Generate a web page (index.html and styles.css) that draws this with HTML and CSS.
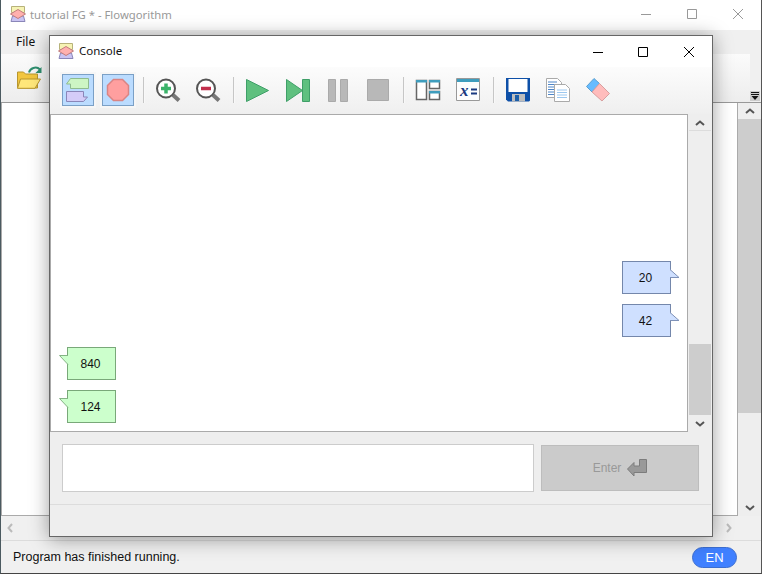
FILE: index.html
```html
<!DOCTYPE html>
<html lang="en">
<head>
<meta charset="utf-8">
<title>tutorial FG * - Flowgorithm</title>
<link rel="stylesheet" href="styles.css">
</head>
<body>
<svg class="defs" width="0" height="0">
  <symbol id="logo" viewBox="0 0 16 16">
    <path d="M1.500.5h13v6h-13z" fill="#f6f3b4" stroke="#b7b27a"/>
    <path d="M2.500 10h11l1.500 5.500H1z" fill="#c9c3f2" stroke="#8a86b8"/>
    <path d="M8 3.500 15.500 8 8 12.500.5 8z" fill="#ffb0ae" stroke="#c07c7c"/>
  </symbol>
  <symbol id="ch-up" viewBox="0 0 10 6"><path d="M1 5 5 1.500 9 5" fill="none" stroke="currentColor" stroke-width="2"/></symbol>
  <symbol id="ch-down" viewBox="0 0 10 6"><path d="M1 1 5 4.500 9 1" fill="none" stroke="currentColor" stroke-width="2"/></symbol>
  <symbol id="ch-left" viewBox="0 0 6 10"><path d="M5 1 1.500 5 5 9" fill="none" stroke="currentColor" stroke-width="2"/></symbol>
  <symbol id="ch-right" viewBox="0 0 6 10"><path d="M1 1 4.500 5 1 9" fill="none" stroke="currentColor" stroke-width="2"/></symbol>
</svg>

<div class="app">
  <header class="titlebar">
    <svg class="logo"><use href="#logo"/></svg>
    <span class="title-text muted">tutorial FG * - Flowgorithm</span>
    <div class="win-controls muted-controls">
      <svg class="wc" viewBox="0 0 10 10"><path d="M0 5.500h10"/></svg>
      <svg class="wc" viewBox="0 0 10 10"><path d="M.5.500h9v9h-9z"/></svg>
      <svg class="wc" viewBox="0 0 10 10"><path d="M0 0l10 10M10 0 0 10"/></svg>
    </div>
  </header>
  <nav class="menubar"><span class="menu-item">File</span></nav>
  <div class="main-toolbar">
    <svg class="open-icon" viewBox="0 0 32 32">
      <path d="M3.500 26V10h6l2 2h12v14z" fill="#f2c63f" stroke="#b8962e"/>
      <path d="M3.500 26.300 6.500 17h20l-5.500 9.300z" fill="#ffe77a" stroke="#b8962e"/>
      <path d="M15 10.500c1-4 7-7 11-3" fill="none" stroke="#2f8f6f" stroke-width="2"/>
      <path d="M27.500 5v6h-6z" fill="#2f8f6f"/>
    </svg>
    <div class="toolbar-end">
      <button class="overflow-btn" type="button">
        <svg width="8" height="8" viewBox="0 0 8 8"><path d="M0 .5h8M0 2.500h8" stroke="#111"/><path d="M.5 4h7L4 8z" fill="#111"/></svg>
      </button>
    </div>
  </div>
  <div class="workspace">
    <div class="canvas"></div>
    <div class="vscroll">
      <svg class="chev-v up"><use href="#ch-up"/></svg>
      <div class="main-thumb"></div>
      <div class="spacer"></div>
      <svg class="chev-v down"><use href="#ch-down"/></svg>
    </div>
  </div>
  <div class="hscroll">
    <svg class="chev-h"><use href="#ch-left"/></svg>
    <svg class="chev-h"><use href="#ch-right"/></svg>
  </div>
  <footer class="statusbar">
    <span>Program has finished running.</span>
    <span class="lang-pill">EN</span>
  </footer>
</div>

<section class="console">
  <header class="console-title">
    <svg class="logo"><use href="#logo"/></svg>
    <span class="title-text">Console</span>
    <div class="win-controls console-controls">
      <svg class="wc" viewBox="0 0 10 10"><path d="M0 5.500h10"/></svg>
      <svg class="wc" viewBox="0 0 10 10"><path d="M.5.500h9v9h-9z"/></svg>
      <svg class="wc" viewBox="0 0 10 10"><path d="M0 0l10 10M10 0 0 10"/></svg>
    </div>
  </header>

  <div class="console-toolbar">
    <button class="tb active" type="button"><svg viewBox="0 0 32 32">
      <path d="M8.500 4.500h18v10h-18v-4.500h-4z" fill="#cdf5c4" stroke="#8fbb8f"/>
      <path d="M4.500 17.500h17v5.500h4l-4 4.500h-17z" fill="#d4ccf8" stroke="#8a86b8"/>
    </svg></button>
    <button class="tb active" type="button"><svg viewBox="0 0 32 32">
      <path d="M11.500 5.500h9l6 6v9l-6 6h-9l-6-6v-9z" fill="#ff9f9f" stroke="#d98484" stroke-width="1.500"/>
    </svg></button>
    <span class="sep"></span>
    <button class="tb" type="button"><svg viewBox="0 0 32 32">
      <path d="M21 21l6 5.500" stroke="#777" stroke-width="4"/>
      <circle cx="14" cy="14.500" r="9" fill="#fff" stroke="#555" stroke-width="2"/>
      <path d="M14 9.500v10M9 14.500h10" stroke="#3bb36a" stroke-width="3.500"/>
    </svg></button>
    <button class="tb" type="button"><svg viewBox="0 0 32 32">
      <path d="M21 21l6 5.500" stroke="#777" stroke-width="4"/>
      <circle cx="14" cy="14.500" r="9" fill="#fff" stroke="#555" stroke-width="2"/>
      <path d="M9 14.500h10" stroke="#c22f4c" stroke-width="3.500"/>
    </svg></button>
    <span class="sep"></span>
    <button class="tb" type="button"><svg viewBox="0 0 32 32">
      <path d="M4.500 5.500 26.500 16.500 4.500 27.500z" fill="#5fc07f" stroke="#3f9f68"/>
    </svg></button>
    <button class="tb" type="button"><svg viewBox="0 0 32 32">
      <path d="M4.500 5.500 20.500 16.500 4.500 27.500z" fill="#5fc07f" stroke="#3f9f68"/>
      <path d="M20.500 5.500h7v22h-7z" fill="#5fc07f" stroke="#3f9f68"/>
    </svg></button>
    <button class="tb" type="button"><svg viewBox="0 0 32 32">
      <path d="M6.500 5.500h7v22h-7zM18.500 5.500h7v22h-7z" fill="#b8b8b8" stroke="#aaa"/>
    </svg></button>
    <button class="tb" type="button"><svg viewBox="0 0 32 32">
      <path d="M5.500 5.500h21v21h-21z" fill="#b8b8b8" stroke="#aaa"/>
    </svg></button>
    <span class="sep"></span>
    <button class="tb" type="button"><svg viewBox="0 0 32 32">
      <path d="M4.500 6.500h10v19h-10zM17.500 6.500h10v8h-10zM17.500 17.500h10v8h-10z" fill="#fff" stroke="#666" stroke-width="1.500"/>
      <path d="M4 6h11v2.500H4zM17 6h11v2.500H17zM17 17h11v2.500H17z" fill="#3f9dbd"/>
    </svg></button>
    <button class="tb" type="button"><svg viewBox="0 0 32 32">
      <path d="M4.500 4.500h23v22h-23z" fill="#fdfdfd" stroke="#999"/>
      <path d="M5 5h22v3H5z" fill="#3f9dbd"/>
      <text class="var-x" x="8" y="22">x</text>
      <path d="M19 14.500h6v2h-6zM19 18.500h6v2h-6z" fill="#1b3a80"/>
    </svg></button>
    <span class="sep"></span>
    <button class="tb" type="button"><svg viewBox="0 0 32 32">
      <path d="M4 4h24v22.500l-1 1H6l-2-2z" fill="#0e50a8"/>
      <path d="M6.500 5h19v13h-19z" fill="#fff"/>
      <path d="M10 20h13v7.500H10z" fill="#bdbdbd"/>
      <path d="M13 21h4v6h-4z" fill="#1c5ea8"/>
    </svg></button>
    <button class="tb" type="button"><svg viewBox="0 0 32 32">
      <path d="M4.500 4.500h11l4 4v15h-15z" fill="#fff" stroke="#aaa"/>
      <path d="M6 8h9M6 10.500h9M6 13h9M6 15.500h9M6 18h9M6 20.500h9" stroke="#4f86c8"/>
      <path d="M12.500 10.500h11l4 4v13h-15z" fill="#fff" stroke="#aaa"/>
      <path d="M15 16h10M15 18.500h10M15 21h10M15 23.500h10" stroke="#9cc8f0"/>
    </svg></button>
    <button class="tb" type="button"><svg viewBox="0 0 32 32">
      <path d="M12 4.500 17.500 9.500 10 18 4.500 12.500z" fill="#66bbff" stroke="#5a9fd0"/>
      <path d="M17.500 9.500 27.500 19.500 20 27 10 18z" fill="#ffbcbc" stroke="#d8a0a0"/>
    </svg></button>
  </div>

  <div class="console-body">
    <div class="transcript">
      <div class="bubble out"><span>20</span>
        <svg class="tail tail-out" viewBox="0 0 10 10"><path d="M0 .5 9 8.500H0" fill="#cfe0ff" stroke="#7f92b8"/></svg>
      </div>
      <div class="bubble out"><span>42</span>
        <svg class="tail tail-out" viewBox="0 0 10 10"><path d="M0 .5 9 8.500H0" fill="#cfe0ff" stroke="#7f92b8"/></svg>
      </div>
      <div class="bubble in"><span>840</span>
        <svg class="tail tail-in" viewBox="0 0 10 10"><path d="M9 .5H.5L9 9.500" fill="#ccffcc" stroke="#86b486"/></svg>
      </div>
      <div class="bubble in"><span>124</span>
        <svg class="tail tail-in" viewBox="0 0 10 10"><path d="M9 .5H.5L9 9.500" fill="#ccffcc" stroke="#86b486"/></svg>
      </div>
    </div>
    <div class="console-scroll">
      <div class="scroll-btn"><svg class="chev-v"><use href="#ch-up"/></svg></div>
      <div class="scroll-track"><div class="console-thumb"></div></div>
      <div class="scroll-btn-end"><svg class="chev-v"><use href="#ch-down"/></svg></div>
    </div>
  </div>

  <div class="input-row">
    <div class="input-box"></div>
    <button class="enter-btn" type="button">
      <span>Enter</span>
      <svg width="21" height="18" viewBox="0 0 21 18"><path d="M12.500.5h7v13h-12.500v3.500L.5 10 7 3.500V7h5.500z" fill="#999" stroke="#7c7c7c"/></svg>
    </button>
  </div>
  <div class="console-status"></div>
</section>
</body>
</html>
```

FILE: styles.css
```css
* { box-sizing: border-box; }

html, body {
  margin: 0;
  padding: 0;
  width: 762px;
  height: 574px;
  overflow: hidden;
  background: #f0f0f0;
  font-family: "Liberation Sans", Arial, sans-serif;
  font-size: 12px;
  color: #111;
}

.defs { position: absolute; }

.app {
  width: 762px;
  height: 574px;
  display: flex;
  flex-direction: column;
  border-left: 1px solid #4b5a60;
  border-right: 1px solid #555;
  border-bottom: 1px solid #444;
  background: #f0f0f0;
}

.titlebar {
  height: 30px;
  flex: none;
  display: flex;
  align-items: center;
  padding: 0 0 2px 9px;
  background: #fff;
}

.logo { width: 16px; height: 16px; flex: none; }

.title-text {
  margin-left: 5px;
  font-family: "Noto Sans", sans-serif;
  font-size: 11.500px;
}
.muted { color: #999; margin-left: 4px; font-size: 11.300px; }

.win-controls { margin-left: auto; display: flex; }
.wc { width: 10px; height: 10px; overflow: visible; fill: none; stroke: currentColor; stroke-width: 1; }
.muted-controls { gap: 36px; margin-right: 18px; color: #999; }
.console-controls { gap: 35px; margin-right: 18px; color: #000; position: relative; top: 1px; }
.console-controls .wc:last-child { margin-left: 1px; }

.menubar {
  height: 24px;
  flex: none;
  padding: 3px 0 0 15px;
  background: #f0f0f0;
}
.menu-item { font-family: "Noto Sans", sans-serif; font-size: 12px; color: #111; }

.main-toolbar {
  height: 49px;
  flex: none;
  display: flex;
  justify-content: space-between;
  padding: 8px 0 0 13px;
  background: linear-gradient(#fbfbfb, #ededed);
  border-bottom: 1px solid #999;
}
.open-icon { width: 32px; height: 32px; }
.toolbar-end {
  width: 11px;
  margin-top: -8px;
  display: flex;
  align-items: flex-end;
  background: #f0f0f0;
}
.overflow-btn {
  width: 10px;
  height: 10px;
  padding: 1px;
  margin-bottom: 1px;
  border: 0;
  background: #ccc;
  display: flex;
  justify-content: center;
}

.workspace { flex: 1; min-height: 0; display: flex; }
.canvas {
  flex: 1;
  background: #fff;
  border-right: 1px solid #aaa;
  border-left: 1px solid #aaa;
  border-bottom: 1px solid #aaa;
}
.vscroll {
  width: 23px;
  flex: none;
  display: flex;
  flex-direction: column;
  align-items: center;
  background: #eee;
}
.chev-v { width: 10px; height: 6px; color: #555; display: block; flex: none; }
.vscroll .up { margin-top: 5px; margin-bottom: 5px; }
.vscroll .down { margin-bottom: 5px; }
.main-thumb { width: 100%; height: 294px; flex: none; background: #cdcdcd; }
.spacer { flex: 1; }

.hscroll {
  height: 25px;
  flex: none;
  display: flex;
  justify-content: space-between;
  align-items: center;
  padding: 0 29px 0 6px;
  border-bottom: 1px solid #dcdcdc;
}
.chev-h { width: 6px; height: 10px; color: #bbb; display: block; }

.statusbar {
  height: 32px;
  flex: none;
  display: flex;
  justify-content: space-between;
  align-items: center;
  padding: 0 24px 0 12px;
  font-size: 12.500px;
}
.lang-pill {
  width: 45px;
  height: 21px;
  border-radius: 11px;
  background: #4080ff;
  border: 1px solid #3c6ed0;
  color: #fff;
  font-size: 13px;
  display: flex;
  align-items: center;
  justify-content: center;
}

/* Floating console window */
.console {
  position: absolute;
  left: 49px;
  top: 35px;
  width: 664px;
  height: 502px;
  display: flex;
  flex-direction: column;
  background: #eee;
  border: 1px solid #666;
  box-shadow: 0 2px 18px rgba(0, 0, 0, .38);
}
.console-title {
  height: 31px;
  flex: none;
  display: flex;
  align-items: center;
  padding: 0 0 2px 8px;
  background: #fff;
}
.console-title .title-text { color: #111; margin-left: 5px; }

.console-toolbar {
  height: 47px;
  flex: none;
  display: flex;
  align-items: flex-start;
  gap: 8px;
  padding: 7px 0 0 12px;
  background: linear-gradient(#fcfcfc, #efefef);
}
.tb {
  width: 32px;
  height: 32px;
  padding: 0;
  border: 0;
  background: none;
  flex: none;
}
.tb svg { display: block; width: 32px; height: 32px; }
.tb.active {
  background: #bbdcff;
  border: 1px solid #7ba0c6;
  outline: 2px solid #f6f6f6;
}
.tb.active svg { margin: -1px; }
.sep {
  width: 1px;
  height: 26px;
  margin: 3px 0 0 1px;
  flex: none;
  background: #c6c6c6;
  box-shadow: 1px 0 0 #f8f8f8;
}
.var-x {
  font-family: "Liberation Serif", serif;
  font-style: italic;
  font-weight: 700;
  font-size: 17px;
  fill: #1b3a80;
}

.console-body {
  height: 318px;
  flex: none;
  display: flex;
}
.transcript {
  width: 638px;
  flex: none;
  display: flex;
  flex-direction: column;
  justify-content: flex-end;
  gap: 10px;
  padding: 0 16px 8px;
  background: #fff;
  border: 1px solid #aaa;
}
.bubble {
  position: relative;
  width: 49px;
  height: 33px;
  padding-right: 2px;
  display: flex;
  align-items: center;
  justify-content: center;
  border: 1px solid;
  color: #111;
}
.bubble.out { align-self: flex-end; background: #cfe0ff; border-color: #7487ab; }
.bubble.in { align-self: flex-start; background: #ccffcc; border-color: #79a879; }
.tail { position: absolute; width: 10px; height: 10px; display: block; overflow: visible; }
.tail-out { left: 47px; top: 7px; }
.tail-in { left: -9px; top: 7px; }

.console-scroll {
  flex: 1;
  display: flex;
  flex-direction: column;
  padding: 0 1px;
  background: #eee;
}
.scroll-btn {
  height: 17px;
  flex: none;
  display: flex;
  justify-content: center;
  align-items: flex-start;
  padding-top: 6px;
  border-bottom: 1px solid #dcdcdc;
}
.scroll-track { flex: 1; display: flex; align-items: flex-end; }
.console-thumb { width: 100%; height: 71px; background: #cdcdcd; }
.scroll-btn-end {
  height: 17px;
  flex: none;
  display: flex;
  justify-content: center;
  align-items: center;
  padding-top: 1px;
}

.input-row {
  flex: none;
  display: flex;
  align-items: center;
  gap: 7px;
  padding: 12px 13px 12px 12px;
}
.input-box {
  width: 472px;
  height: 48px;
  background: #fff;
  border: 1px solid #ccc;
}
.enter-btn {
  width: 158px;
  height: 46px;
  padding: 0 0 0 1px;
  display: flex;
  align-items: center;
  justify-content: center;
  gap: 6px;
  background: #cbcbcb;
  border: 1px solid #bdbdbd;
  color: #999;
  font-family: "Liberation Sans", Arial, sans-serif;
  font-size: 12px;
}
.console-status {
  flex: 1;
  margin-right: 1px;
  border-top: 1px solid #dcdcdc;
}
```
